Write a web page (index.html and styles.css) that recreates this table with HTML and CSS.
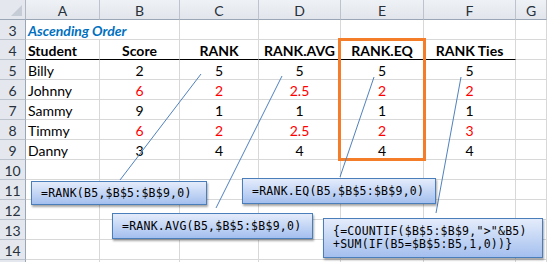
FILE: index.html
```html
<!DOCTYPE html>
<html>
<head>
<meta charset="utf-8">
<link rel="stylesheet" href="styles.css">
</head>
<body>
<div class="sheet">
  <div class="grid">
    <div class="corner"><span class="tri"></span></div>
    <div class="ch">A</div><div class="ch">B</div><div class="ch">C</div><div class="ch">D</div><div class="ch">E</div><div class="ch">F</div><div class="ch">G</div>

    <div class="rh">3</div><div class="c title">Ascending Order</div><div class="c"></div><div class="c"></div><div class="c"></div><div class="c"></div><div class="c"></div>

    <div class="rh">4</div><div class="c hd left">Student</div><div class="c hd">Score</div><div class="c hd">RANK</div><div class="c hd">RANK.AVG</div><div class="c hd">RANK.EQ</div><div class="c hd">RANK Ties</div><div class="c"></div>

    <div class="rh">5</div><div class="c left">Billy</div><div class="c num">2</div><div class="c num">5</div><div class="c num">5</div><div class="c num">5</div><div class="c num">5</div><div class="c"></div>
    <div class="rh">6</div><div class="c left">Johnny</div><div class="c num red">6</div><div class="c num red">2</div><div class="c num red">2.5</div><div class="c num red">2</div><div class="c num red">2</div><div class="c"></div>
    <div class="rh">7</div><div class="c left">Sammy</div><div class="c num">9</div><div class="c num">1</div><div class="c num">1</div><div class="c num">1</div><div class="c num">1</div><div class="c"></div>
    <div class="rh">8</div><div class="c left">Timmy</div><div class="c num red">6</div><div class="c num red">2</div><div class="c num red">2.5</div><div class="c num red">2</div><div class="c num red">3</div><div class="c"></div>
    <div class="rh">9</div><div class="c left">Danny</div><div class="c num">3</div><div class="c num">4</div><div class="c num">4</div><div class="c num">4</div><div class="c num">4</div><div class="c"></div>

    <div class="rh">10</div><div class="c"></div><div class="c"></div><div class="c"></div><div class="c"></div><div class="c"></div><div class="c"></div><div class="c"></div>
    <div class="rh">11</div><div class="c"></div><div class="c"></div><div class="c"></div><div class="c"></div><div class="c"></div><div class="c"></div><div class="c"></div>
    <div class="rh">12</div><div class="c"></div><div class="c"></div><div class="c"></div><div class="c"></div><div class="c"></div><div class="c"></div><div class="c"></div>
    <div class="rh">13</div><div class="c"></div><div class="c"></div><div class="c"></div><div class="c"></div><div class="c"></div><div class="c"></div><div class="c"></div>
    <div class="rh">14</div><div class="c"></div><div class="c"></div><div class="c"></div><div class="c"></div><div class="c"></div><div class="c"></div><div class="c"></div>
    <div class="rh"></div><div class="c"></div><div class="c"></div><div class="c"></div><div class="c"></div><div class="c"></div><div class="c"></div><div class="c"></div>
  </div>

  <div class="highlight"></div>

  <svg class="connectors" width="547" height="262" viewBox="0 0 547 262">
    <line x1="201" y1="74" x2="120" y2="180"/>
    <line x1="282" y1="76" x2="216" y2="208"/>
    <line x1="374" y1="77" x2="340" y2="177"/>
    <line x1="461" y1="77" x2="436" y2="213"/>
  </svg>

  <div class="note n1">=RANK(B5,$B$5:$B$9,0)</div>
  <div class="note n3">=RANK.EQ(B5,$B$5:$B$9,0)</div>
  <div class="note n2">=RANK.AVG(B5,$B$5:$B$9,0)</div>
  <div class="note n4">{=COUNTIF($B$5:$B$9,"&gt;"&amp;B5)<br>+SUM(IF(B5=$B$5:B5,1,0))}</div>
</div>
</body>
</html>
```

FILE: styles.css
```css
html, body {
  margin: 0;
  padding: 0;
  background: #ffffff;
}

.sheet {
  position: relative;
  width: 547px;
  height: 262px;
  overflow: hidden;
  font-family: Lato, "Liberation Sans", sans-serif;
}

.grid {
  display: grid;
  grid-template-columns: 26px 74px 80px 79px 82px 83px 92px 1fr;
  grid-auto-rows: 20px;
  background: #ffffff;
}

.grid > div {
  box-sizing: border-box;
  border-right: 1px solid #d8d8d8;
  border-bottom: 1px solid #d8d8d8;
  display: flex;
  align-items: center;
  white-space: nowrap;
  font-size: 14px;
  line-height: 19px;
  color: #000;
  padding-top: 1px;
}

.corner {
  position: relative;
  background: #e4e8ee;
  border-right-color: #b0b7c1 !important;
  border-bottom-color: #9aa6b6 !important;
}

.tri {
  position: absolute;
  right: 3px;
  bottom: 3px;
  width: 0;
  height: 0;
  border-left: 11px solid transparent;
  border-bottom: 11px solid #c5ccd5;
}

.ch {
  justify-content: center;
  background: linear-gradient(#eef1f5, #e2e6ec);
  border-right-color: #bcc3cc !important;
  border-bottom-color: #9aa6b6 !important;
  color: #27303b !important;
}

.rh {
  justify-content: center;
  background: #e4e8ee;
  border-right-color: #9aa6b6 !important;
  border-bottom-color: #bcc3cc !important;
  color: #27303b !important;
}

.title {
  grid-column: span 2;
  font-weight: bold;
  font-style: italic;
  color: #0070c0 !important;
  padding-left: 2px;
}

.hd {
  font-weight: bold;
  justify-content: center;
  border-bottom-color: #000 !important;
}

.left {
  justify-content: flex-start;
  padding-left: 2px;
}

.num {
  justify-content: center;
}

.red {
  color: #ff0000 !important;
}

.highlight {
  position: absolute;
  left: 338px;
  top: 38px;
  width: 88px;
  height: 123px;
  box-sizing: border-box;
  border: 3px solid #f47d2a;
}

.connectors {
  position: absolute;
  left: 0;
  top: 0;
  pointer-events: none;
}

.connectors line {
  stroke: #4f81bd;
  stroke-width: 1;
}

.note {
  position: absolute;
  box-sizing: border-box;
  border: 1px solid #4a7ebb;
  background: linear-gradient(#e4ecfb, #c4d6f5 50%, #a4bfee);
  box-shadow: 1px 2px 2px rgba(0, 0, 0, 0.35);
  font-family: "DejaVu Sans Mono", "Liberation Mono", monospace;
  font-size: 11.5px;
  letter-spacing: 0.25px;
  color: #000;
  white-space: nowrap;
  padding-left: 9px;
  display: flex;
  flex-direction: column;
  justify-content: center;
  line-height: 14px;
}

.n1 { left: 31px;  top: 181px; width: 176px; height: 24px; }
.n2 { left: 112px; top: 213px; width: 201px; height: 26px; }
.n3 { left: 242px; top: 178px; width: 194px; height: 26px; }
.n4 { left: 323px; top: 218px; width: 220px; height: 40px; line-height: 13.5px; }
```
